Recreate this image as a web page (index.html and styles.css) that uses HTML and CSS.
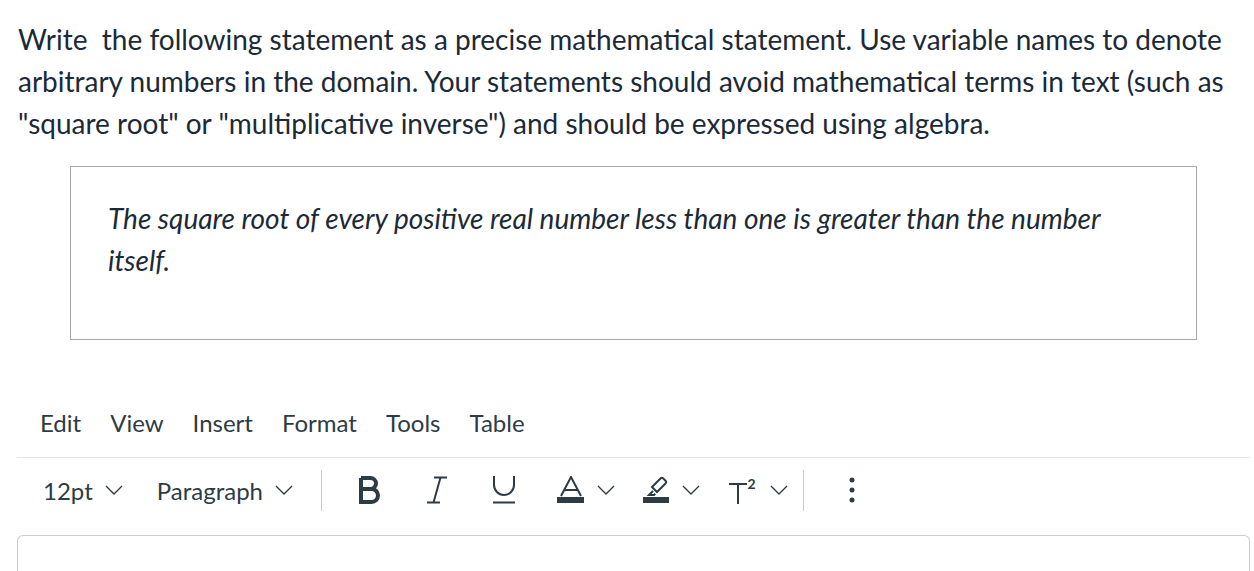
FILE: index.html
```html
<!DOCTYPE html>
<html lang="en">
<head>
  <meta charset="UTF-8">
  <title>Question</title>
  <link rel="stylesheet" href="styles.css">
</head>
<body>
  <div class="page">
    <p class="question">Write&nbsp; the following statement as a precise mathematical statement. Use variable names to denote arbitrary numbers in the domain. Your statements should avoid mathematical terms in text (such as "square root" or "multiplicative inverse") and should be expressed using algebra.</p>

    <div class="statement">
      <p>The square root of every positive real number less than one is greater than the number itself.</p>
    </div>

    <div class="editor">
      <div class="menubar">
        <span class="menu">Edit</span>
        <span class="menu">View</span>
        <span class="menu">Insert</span>
        <span class="menu">Format</span>
        <span class="menu">Tools</span>
        <span class="menu">Table</span>
      </div>

      <div class="toolbar">
        <span class="select size">12pt</span>
        <svg class="chev" width="18" height="10" viewBox="0 0 18 10"><polyline points="1,1 9,9 17,1"/></svg>
        <span class="select para">Paragraph</span>
        <svg class="chev" width="18" height="10" viewBox="0 0 18 10"><polyline points="1,1 9,9 17,1"/></svg>
        <span class="sep sep-first"></span>

        <svg class="icon bold" width="24" height="28" viewBox="0 0 24 28">
          <path d="M3 2 V26 H13.5 A6.5 6.5 0 0 0 13.5 13 H3 M3 13 H12.5 A5.5 5.5 0 0 0 12.5 2 H3" stroke-width="4"/>
        </svg>
        <svg class="icon italic" width="22" height="28" viewBox="0 0 22 28">
          <path d="M8 1.5 H21 M1 26.5 H14 M14.5 1.5 L7.5 26.5"/>
        </svg>
        <svg class="icon under" width="24" height="28" viewBox="0 0 24 28">
          <path d="M2 0 V9 A10 10 0 0 0 22 9 V0 M1 26.5 H23"/>
        </svg>
        <svg class="icon color" width="28" height="28" viewBox="0 0 28 28">
          <path d="M4 20 L14 1 L24 20 M7.5 14 H20.5"/>
          <rect x="0" y="21" width="27" height="6" class="fill"/>
        </svg>
        <svg class="chev" width="18" height="10" viewBox="0 0 18 10"><polyline points="1,1 9,9 17,1"/></svg>
        <svg class="icon mark" width="27" height="28" viewBox="0 0 27 28">
          <path d="M9 11 L17.5 2.5 A2 2 0 0 1 20.3 2.5 L22.5 4.7 A2 2 0 0 1 22.5 7.5 L14 16 Z M9 11 L14 16 M10 15 L6 19 H11 L12.3 17.7"/>
          <rect x="0" y="21" width="26" height="6" class="fill"/>
        </svg>
        <svg class="chev" width="18" height="10" viewBox="0 0 18 10"><polyline points="1,1 9,9 17,1"/></svg>
        <svg class="icon sup" width="30" height="28" viewBox="0 0 30 28">
          <path d="M1 8 H19 M10 8 V28"/>
          <text x="19.5" y="13" class="sup-num">2</text>
        </svg>
        <svg class="chev" width="18" height="10" viewBox="0 0 18 10"><polyline points="1,1 9,9 17,1"/></svg>
        <span class="sep sep-last"></span>
        <svg class="icon more" width="6" height="26" viewBox="0 0 6 26">
          <circle cx="3" cy="3" r="2.5"/>
          <circle cx="3" cy="13" r="2.5"/>
          <circle cx="3" cy="23" r="2.5"/>
        </svg>
      </div>

      <div class="content"></div>
    </div>
  </div>
</body>
</html>
```

FILE: styles.css
```css
* {
  box-sizing: border-box;
}

body {
  margin: 0;
  background: #ffffff;
  font-family: Lato, "Open Sans", sans-serif;
  color: #1b2a36;
}

.page {
  padding: 18px 4px 0 17px;
}

.question {
  margin: 0 0 22px 1px;
  font-size: 28px;
  line-height: 42px;
}

.statement {
  margin: 0 53px 0 53px;
  height: 174px;
  border: 1px solid #a9a9a9;
  padding: 30px 36px 0 37px;
}

.statement p {
  margin: 0;
  font-size: 28px;
  line-height: 42px;
  font-style: italic;
}

.editor {
  margin-top: 68px;
  color: #2d3b45;
}

.menubar {
  display: flex;
  gap: 29px;
  padding: 0 0 0 23px;
  height: 50px;
  font-size: 24px;
  line-height: 29px;
  border-bottom: 1px solid #e6e6e6;
}

.toolbar {
  display: flex;
  align-items: center;
  height: 64px;
  padding-left: 26px;
  font-size: 24px;
}

.select {
  line-height: 29px;
}

.chev {
  margin-left: 12px;
  fill: none;
  stroke: #2d3b45;
  stroke-width: 1.3;
}

.para {
  margin-left: 34px;
}

.sep {
  width: 1px;
  height: 41px;
  background: #c7cdd1;
}

.sep-first {
  margin-left: 28px;
}

.sep-last {
  margin-left: 15px;
}

.icon {
  fill: none;
  stroke: #2d3b45;
  stroke-width: 2;
}

.icon .fill,
.icon circle {
  fill: #2d3b45;
  stroke: none;
}

.bold {
  margin-left: 36px;
}

.italic {
  margin-left: 44px;
}

.under {
  margin-left: 44px;
}

.color {
  margin-left: 41px;
}

.mark {
  margin-left: 28px;
}

.sup {
  margin-left: 28px;
}

.sup .sup-num {
  fill: #2d3b45;
  stroke: none;
  font-family: Lato, sans-serif;
  font-weight: bold;
  font-size: 14px;
}

.more {
  margin-left: 45px;
}

.content {
  margin-top: 13px;
  height: 40px;
  border: 1px solid #c7cdd1;
  border-bottom: none;
  border-radius: 6px 6px 0 0;
}
```
